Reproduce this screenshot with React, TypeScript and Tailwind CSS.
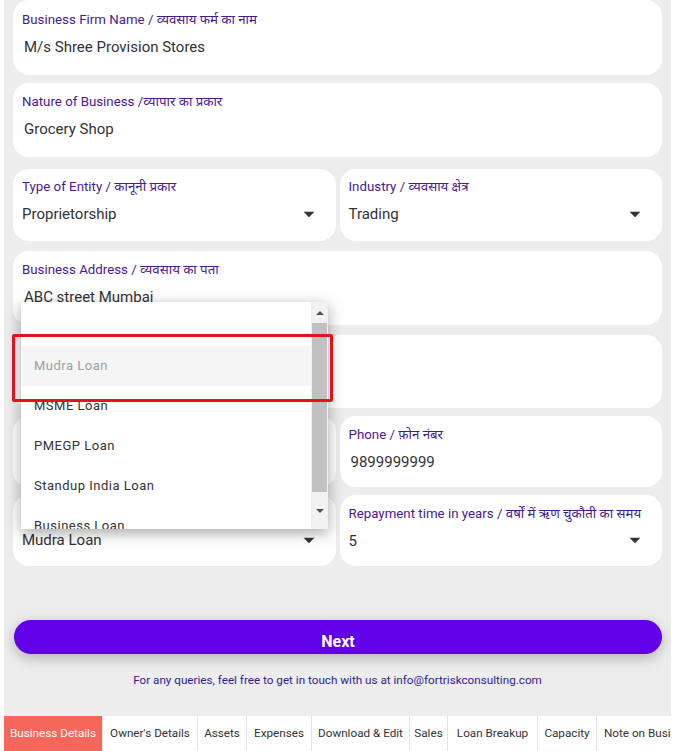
import React from 'react';

const Caret = ({ className = '' }: { className?: string }) => (
  <svg viewBox="0 0 24 24" className={className} fill="currentColor">
    <path d="M7 10l5 5 5-5z" />
  </svg>
);

const Field = ({
  label,
  value,
  select,
  className = '',
}: {
  label?: string;
  value?: string;
  select?: boolean;
  className?: string;
}) => (
  <div className={`relative rounded-2xl bg-white pl-[9px] pr-3 pt-[11px] ${className}`}>
    {label && <div className="text-[13.3px] leading-4 text-[#4a1a8c] whitespace-nowrap">{label}</div>}
    {value && (
      <div className={`mt-[9px] text-[15px] leading-5 text-[#333] ${select ? '' : 'pl-[2px]'}`}>{value}</div>
    )}
    {select && <Caret className="absolute right-[14px] top-[32px] h-[26px] w-[26px] text-[#333]" />}
  </div>
);

const loanOptions = ['Mudra Loan', 'MSME Loan', 'PMEGP Loan', 'Standup India Loan', 'Business Loan'];

const tabs: [string, string][] = [
  ['Business Details', 'w-[99px]'],
  ["Owner's Details", 'w-[95px]'],
  ['Assets', 'w-[49px]'],
  ['Expenses', 'w-[65px]'],
  ['Download & Edit', 'w-[98px]'],
  ['Sales', 'w-[38px]'],
  ['Loan Breakup', 'w-[90px]'],
  ['Capacity', 'w-[59px]'],
  ['Note on Business', 'w-[110px]'],
];

export default function App() {
  return (
    <div className="min-h-screen bg-white font-['Roboto','Noto_Sans',sans-serif]">
      <div className="relative ml-1 flex h-[751px] w-[667px] flex-col overflow-hidden bg-[#ededed]">
        <div className="flex flex-col px-[9px]">
          <Field
            label="Business Firm Name / व्यवसाय फर्म का नाम"
            value="M/s Shree Provision Stores"
            className="h-[75px] !pt-[12px]"
          />
          <Field label="Nature of Business /व्यापार का प्रकार" value="Grocery Shop" className="mt-2 h-[74px]" />
          <div className="mt-3 grid h-[72px] grid-cols-2 gap-[4px]">
            <Field label="Type of Entity / कानूनी प्रकार" value="Proprietorship" select className="!pt-[10px]" />
            <Field label="Industry / व्यवसाय क्षेत्र" value="Trading" select className="!pt-[10px]" />
          </div>
          <Field label="Business Address / व्यवसाय का पता" value="ABC street Mumbai" className="mt-2.5 h-[74px]" />
          <Field className="mt-2.5 h-[73px]" />
          <div className="mt-2 grid h-[71px] grid-cols-2 gap-[4px]">
            <Field />
            <Field label="Phone / फ़ोन नंबर" value="9899999999" />
          </div>
          <div className="mt-2 grid h-[71px] grid-cols-2 gap-[4px]">
            <Field value="Mudra Loan" select className="!pt-[35px] [&>div]:!mt-0" />
            <Field label="Repayment time in years / वर्षों में ऋण चुकौती का समय" value="5" select />
          </div>
        </div>

        <div className="mt-[54px] pl-[10px] pr-[9px]">
          <button className="h-[34px] w-full rounded-full bg-[#6200ea] pt-[9px] text-[16px] font-bold leading-5 text-white shadow-[0_4px_14px_rgba(0,0,0,0.25)]">
            Next
          </button>
        </div>

        <p className="mt-[18px] text-center text-[11.7px] leading-4 text-[#311b92]">
          For any queries, feel free to get in touch with us at info@fortriskconsulting.com
        </p>

        <div className="mt-auto flex h-[35px] bg-white">
          {tabs.map(([t, w], i) => (
            <div
              key={t}
              className={`flex shrink-0 items-center justify-center overflow-hidden whitespace-nowrap border-r border-[#e3e3e3] text-[11.7px] ${w} ${
                i === 0 ? 'bg-[#f7665a] text-white' : 'text-[#333]'
              } ${i === tabs.length - 1 ? '!justify-start pl-[7px]' : ''}`}
            >
              {t}
            </div>
          ))}
        </div>

        {/* open select menu */}
        <div className="absolute left-[17px] top-[302px] flex h-[227px] w-[307px] overflow-hidden bg-white shadow-[0_4px_14px_rgba(0,0,0,0.35)]">
          <div className="flex-1 pt-1">
            <div className="h-10" />
            {loanOptions.map((o, i) => (
              <div
                key={o}
                className={`flex h-10 items-center pl-[13px] text-[13px] tracking-[0.5px] ${
                  i === 0 ? 'bg-[#f5f5f5] text-[#9e9e9e]' : 'text-[#333]'
                }`}
              >
                {o}
              </div>
            ))}
          </div>
          <div className="flex w-[17px] flex-col items-center bg-[#f1f1f1]">
            <div className="flex h-[21px] items-center">
              <div className="h-0 w-0 border-x-[4px] border-b-[4px] border-x-transparent border-b-[#505050]" />
            </div>
            <div className="h-[169px] w-[15px] bg-[#c1c1c1]" />
            <div className="flex h-[37px] items-center">
              <div className="h-0 w-0 border-x-[4px] border-t-[4px] border-x-transparent border-t-[#505050]" />
            </div>
          </div>
        </div>

        {/* annotation box */}
        <div className="absolute left-[8px] top-[334px] h-[68px] w-[321px] rounded-[2px] border-[3px] border-[#e4121b]" />
      </div>
    </div>
  );
}
